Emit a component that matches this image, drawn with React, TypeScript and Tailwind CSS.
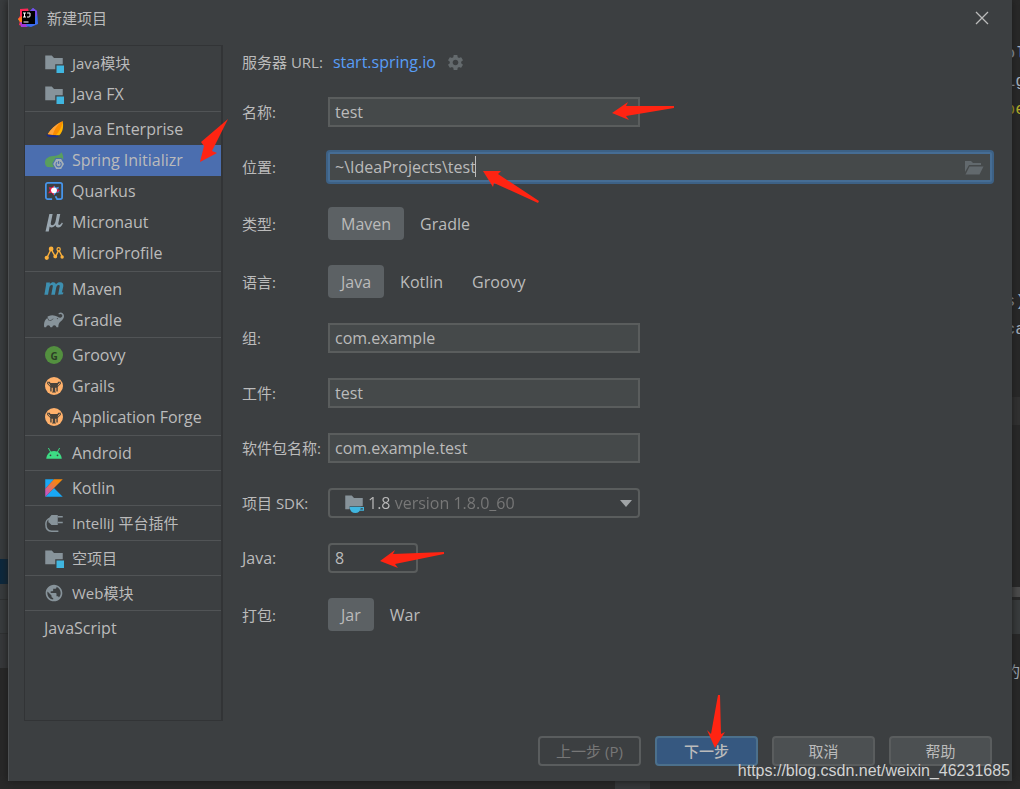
import { ReactNode, useState } from 'react';
import { MdPublic, MdSettings } from 'react-icons/md';
import { SiGradle } from 'react-icons/si';

const Svg = ({ children }: { children: ReactNode }) => (
    <svg viewBox="0 0 16 16" className="size-5 shrink-0" aria-hidden="true">{children}</svg>
);

const FolderShape = () => <path d="M1 2h5.2l1.8 2H15v9H1z" fill="#87939a" />;

const ModuleIcon = () => (
    <Svg>
        <FolderShape />
        <path d="M9 9h7v7H9z" fill="#3c3f41" />
        <path d="M10 10h6v6h-6z" fill="#40b6e0" />
    </Svg>
);

const SdkIcon = () => (
    <Svg>
        <FolderShape />
        <path d="M4.5 10.500H16v5.500H4.5z" fill="#3c3f41" />
        <path d="M4.500 11h9c0 3-1.800 5-4.500 5s-4.500-2-4.500-5z" fill="#40b6e0" />
        <path d="M13 11.700h2.600v1.900H12.500" fill="none" stroke="#40b6e0" />
    </Svg>
);

const EnterpriseIcon = () => (
    <Svg>
        <path d="M15 1.500C9.500 4 5 8.500 3 12.300l7 .7C13 9.500 15 6 15 1.500z" fill="#f98b00" />
        <path d="M15 1.500c.7 4.500.3 8.500-2.800 11.500H9.500C12.500 9.500 14.500 5.500 15 1.500z" fill="#ffb300" />
        <path d="M13.500 2.500C9 4.500 5.500 8 3 12l4 .5C8 8.500 10.500 5 13.500 2.500z" fill="#ffa33a" />
        <path d="M1.500 12.300l5 .5 5.500.6-1.500 1.200H5c-1.500-.2-2.700-1-3.500-2.300z" fill="#1c2d85" />
    </Svg>
);

const SpringIcon = () => (
    <Svg>
        <path d="M14 1.800c-1.300 2.200-3.600 2.800-6.600 3C3.300 5 1 7 .8 9.800c-.1 1.600.5 2.800 1.700 3.700l5 .3 7.700-5.600C15.800 6.200 15.300 4 14 1.800z" fill="#599e5e" />
        <path d="M9.200 6.300h5l2.600 4.700-2.600 4.800h-5L6.600 11z" fill="#4b6eaf" />
        <path d="M9.700 7.200h4L16 11.200l-2.300 4h-4l-2.300-4z" fill="#a4afb6" />
        <path d="M10.500 9.700a2.100 2.100 0 1 0 2.400 0M11.700 8.800v2.400" fill="none" stroke="#4b6eaf" strokeWidth=".9" />
    </Svg>
);

const QuarkusIcon = () => (
    <Svg>
        <path d="M6.500 14.500H3A1.500 1.500 0 0 1 1.500 13V3A1.500 1.500 0 0 1 3 1.500h10A1.500 1.500 0 0 1 14.500 3v10a1.500 1.500 0 0 1-1.500 1.500h-2.500l-1.300-2.300" fill="none" stroke="#4695eb" strokeWidth="1.400" />
        <path d="M8 3.500l1.500 1.700L12 4.500l-1 2.800 1.500 1.700-2.700.3L8 11.500z" fill="#4695eb" />
        <path d="M8 3.500v8L6.300 9.500l-3 .2 1.500-2.200-1-2.500 2.700.2z" fill="#e0214f" />
        <path d="M12.700 7.500l-2.500 1.700V6z" fill="#e0214f" />
        <circle cx="8" cy="7.400" r="2.300" fill="#fff" />
    </Svg>
);

const MicronautIcon = () => (
    <Svg>
        <path d="M4.300 1.500h2.600L5.500 8.300c-.3 1.500.1 2.200 1 2.200 1.200 0 2.300-1.200 2.700-3l1.200-6H13l-1.500 7.300c-.2 1 0 1.500.6 1.500.8 0 1.600-.7 2.200-1.900l.8.5c-.8 2.200-2.100 3.500-3.800 3.500-1.300 0-2-.7-2-2-1 1.300-2.100 2-3.300 2-.7 0-1.200-.3-1.500-.8L3.800 15.500H1.200z" fill="#9aa7b0" />
    </Svg>
);

const MicroProfileIcon = () => (
    <Svg>
        <path d="M2.200 12L5.700 5l3.500 6.200 2.600-5.700 2.800 5.500" fill="none" stroke="#fbb03b" strokeWidth="1.100" />
        <circle cx="2.200" cy="11.800" r="1.700" fill="#fbb03b" />
        <circle cx="5.700" cy="4.700" r="1.900" fill="#fbb03b" />
        <circle cx="9" cy="10.700" r="1.500" fill="#fbb03b" />
        <circle cx="11.700" cy="5" r="1.300" fill="#3c3f41" stroke="#fbb03b" />
        <circle cx="14.500" cy="11.200" r="1.400" fill="#fbb03b" />
    </Svg>
);

const MavenIcon = () => (
    <Svg>
        <path d="M1.800 2.800h3l-.2 1.300C5.500 3 6.400 2.500 7.400 2.500c1.200 0 1.900.6 2.100 1.700.9-1.200 2-1.700 3.300-1.700 2.200 0 3 1.300 2.600 3.400L14.300 10.800l1.200-.2-.3 1.600-3.900.3 1.200-6.300c.2-1-.1-1.500-.8-1.500-1 0-1.700.9-2 2.400L8.700 12.500H5.800L7 6.200c.2-1-.1-1.500-.8-1.500-1 0-1.700.9-2 2.400L3.200 12.500H.3L1.600 5z" fill="#3d8fb0" />
    </Svg>
);

const GrailsIcon = () => (
    <Svg>
        <circle cx="8" cy="8" r="7.200" fill="#ffb16b" />
        <path d="M2.500 4.500h2.200l.5 1h5.600l.5-1h2.200v1.700l-1.600 1.600-.9 1v3.600h-1.100V9.300H9v2.900l.7 1H6.300l.7-1V9.300h-.9v3.100H5V8.800l-.9-1-1.600-1.600z" fill="#46423c" />
        <path d="M3.300 5.300l1.500 2.200M12.700 5.300l-1.500 2.200" stroke="#ffb16b" strokeWidth=".7" />
    </Svg>
);

const GroovyIcon = () => (
    <span className="m-px grid size-[18px] shrink-0 place-items-center rounded-full bg-[#53903f] text-[10px] font-bold text-[#2b3d26]">G</span>
);

const AndroidIcon = () => (
    <Svg>
        <path d="M1.800 12.500C2 9 4.600 6.300 8 6.300s6 2.700 6.200 6.200z" fill="#3ddc84" />
        <path d="M3.500 4l1.800 3.200M12.500 4l-1.800 3.200" stroke="#3ddc84" strokeWidth=".8" />
        <circle cx="5.200" cy="9.800" r=".7" fill="#3c3f41" />
        <circle cx="10.800" cy="9.800" r=".7" fill="#3c3f41" />
    </Svg>
);

const KotlinIcon = () => (
    <Svg>
        <defs>
            <linearGradient id="kt" x1="0" y1="1" x2="1" y2="0">
                <stop offset=".15" stopColor="#c757bc" />
                <stop offset=".45" stopColor="#e8744f" />
                <stop offset=".8" stopColor="#f88909" />
            </linearGradient>
        </defs>
        <path d="M1 1h7L1 8.500zM1 15l7-7 7 7z" fill="#19a8f5" />
        <path d="M8 1h7L1 15V8.500z" fill="url(#kt)" />
    </Svg>
);

const PluginIcon = () => (
    <Svg>
        <path d="M6 1.500h5v8H6l-2-2H3.500V4H4z" fill="#87939a" />
        <path d="M11 3h4M11 7.500h4" stroke="#87939a" strokeWidth="1.200" />
        <path d="M4.500 4.500C2.500 5 1.500 6.800 1.500 9c0 3.500 1.800 5.500 4.500 5.500h5.500" fill="none" stroke="#87939a" strokeWidth="1.200" />
    </Svg>
);

const IdeaIcon = () => (
    <svg viewBox="0 0 20 20" className="size-5" aria-hidden="true">
        <path d="M2 1l8-.5 2 8L4 18l-3-1 1-4-2-2 2-3z" fill="#fe2857" />
        <path d="M0 11l4-3 2 6-3 2z" fill="#fc801d" />
        <path d="M2 14l10 2-3 3H3z" fill="#a238d6" />
        <path d="M12 3l3-3 4 3 1 13-7 3-5-1z" fill="#3b6cf0" />
        <path d="M12 3l3-3 4 3v5l-6 2z" fill="#7b4be8" />
        <path d="M4 3h13v13H4z" fill="#000" />
        <path d="M5 5h3M6.500 5v4M5 9h3M9 5h3v3q0 1-1 1H9M5.500 14h5" fill="none" stroke="#fff" />
    </svg>
);

type Item = { name: string; icon?: ReactNode };

const groups: Item[][] = [
    [
        { name: 'Java模块', icon: <ModuleIcon /> },
        { name: 'Java FX', icon: <ModuleIcon /> },
    ],
    [
        { name: 'Java Enterprise', icon: <EnterpriseIcon /> },
        { name: 'Spring Initializr', icon: <SpringIcon /> },
        { name: 'Quarkus', icon: <QuarkusIcon /> },
        { name: 'Micronaut', icon: <MicronautIcon /> },
        { name: 'MicroProfile', icon: <MicroProfileIcon /> },
    ],
    [
        { name: 'Maven', icon: <MavenIcon /> },
        { name: 'Gradle', icon: <SiGradle className="size-5 shrink-0 text-[#87939a]" /> },
    ],
    [
        { name: 'Groovy', icon: <GroovyIcon /> },
        { name: 'Grails', icon: <GrailsIcon /> },
        { name: 'Application Forge', icon: <GrailsIcon /> },
    ],
    [{ name: 'Android', icon: <AndroidIcon /> }],
    [{ name: 'Kotlin', icon: <KotlinIcon /> }],
    [{ name: 'IntelliJ 平台插件', icon: <PluginIcon /> }],
    [{ name: '空项目', icon: <ModuleIcon /> }],
    [{ name: 'Web模块', icon: <MdPublic className="size-5 shrink-0 text-[#87939a]" /> }],
    [{ name: 'JavaScript' }],
];

// Latin-only texts are set a little larger than the ones with Chinese in them
const textSize = (text: string) => (/^[\x20-\x7e]+$/.test(text) ? 'text-[16px]' : 'text-[15px]');

// Red pointers laid over the controls they mark
const Arrow = ({ points, className }: { points: string; className: string }) => (
    <svg className={`pointer-events-none absolute z-10 overflow-visible ${className}`} aria-hidden="true">
        <polygon points={points} fill="#ff2412" />
    </svg>
);

const Row = ({ label, id, children }: { label: string; id: string; children: ReactNode }) => (
    <div className="flex items-center">
        <label htmlFor={id} className={`w-[86px] shrink-0 whitespace-nowrap ${textSize(label)}`}>{label}</label>
        {children}
    </div>
);

const Choice = ({ label, options, initial }: { label: string; options: string[]; initial: string }) => {
    const [value, setValue] = useState(initial);

    return (
        <div className="flex items-center" role="group" aria-label={label}>
            <span className="w-[86px] shrink-0">{label}</span>
            <div className="flex gap-[3px]">
                {options.map((option) => (
                    <button
                        key={option}
                        type="button"
                        aria-pressed={option === value}
                        onClick={() => setValue(option)}
                        className={`h-[33px] rounded px-[13px] text-[16px] ${option === value ? 'bg-[#5c6164]' : ''}`}
                    >
                        {option}
                    </button>
                ))}
            </div>
        </div>
    );
};

const field = 'h-[30px] w-[312px] border-2 border-[#5a5d5d] bg-[#45494a] px-[5px] text-[16px] outline-none';
const footerButton = 'h-[30px] w-[103px] rounded border-2';

const App = () => {
    const [selected, setSelected] = useState('Spring Initializr');

    return (
        <div className="relative flex min-h-screen flex-col overflow-hidden bg-[#292929] font-['Open_Sans','Noto_Sans_CJK_SC',sans-serif] text-[15px] leading-5 text-[#bbbbbb]">
            <div className="flex flex-1">
                {/* editor window showing behind the dialog */}
                <div className="flex w-2 shrink-0 flex-col">
                    <div className="h-[559px] bg-[#393c3e]" />
                    <div className="h-[25px] bg-[#0d293e]" />
                    <div className="h-4 border-b border-[#303233] bg-[#393c3e]" />
                    <div className="h-[34px] border-b border-[#303233] bg-[#393c3e]" />
                    <div className="h-[34px] bg-[#37393b]" />
                </div>

                <main className="relative flex min-w-0 flex-1 flex-col border-l border-[#4d5052] bg-[#3c3f41] shadow-[0_0_8px_#1a1a1a]">
                    <header className="flex h-9 items-center pr-[23px] pl-[9px]">
                        <IdeaIcon />
                        <h1 className="ml-[9px] flex-1">新建项目</h1>
                        <button type="button" aria-label="Close">
                            <svg viewBox="0 0 14 14" className="size-3.5" aria-hidden="true">
                                <path d="M1 1l12 12M13 1L1 13" stroke="#bbbbbb" strokeWidth="1.300" />
                            </svg>
                        </button>
                    </header>

                    <div className="mt-[9px] flex flex-1 pr-5 pl-[15px]">
                        <nav className="relative w-[199px] shrink-0 border border-r-2 border-[#323436]">
                            {groups.map((items, i) => (
                                <ul
                                    key={i}
                                    className={`pt-0.5 ${items.length > 2 ? 'pb-0.5' : 'pb-px'} ${i > 0 ? 'border-t border-[#515456]' : ''}`}
                                >
                                    {items.map((item) => (
                                        <li key={item.name}>
                                            <button
                                                type="button"
                                                onClick={() => setSelected(item.name)}
                                                className={`flex h-[31px] w-full items-center gap-2 pb-0.5 pl-[19px] whitespace-nowrap ${textSize(item.name)} ${item.name === selected ? 'bg-[#4b6eaf]' : ''}`}
                                            >
                                                {item.icon}
                                                {item.name}
                                            </button>
                                        </li>
                                    ))}
                                </ul>
                            ))}
                            <Arrow
                                className="top-[73px] left-[175px] h-11 w-7"
                                points="28,0 1,23 4,27 0,43 17,34 12,32"
                            />
                        </nav>

                        <form className="ml-[19px] flex min-w-0 flex-1 flex-col gap-[25px]" onSubmit={(e) => e.preventDefault()}>
                            <div className="-mb-[7px] flex h-[34px] items-center whitespace-nowrap">
                                <span>服务器 URL:</span>
                                <a href="#server" className="ml-2.5 text-[16px] text-[#589df6]">start.spring.io</a>
                                <button type="button" aria-label="Server settings" className="ml-2.5">
                                    <MdSettings className="size-[19px] text-[#646a6d]" />
                                </button>
                            </div>

                            <Row label="名称:" id="name">
                                <div className="relative">
                                    <input id="name" defaultValue="test" className={field} />
                                    <Arrow
                                        className="top-[5px] left-[284px] h-[18px] w-[62px]"
                                        points="0,11 16,0 14,4 62,4 62,6 14,14 17,18"
                                    />
                                </div>
                            </Row>

                            <Row label="位置:" id="location">
                                <div className="relative flex-1">
                                    <input
                                        id="location"
                                        defaultValue="~\IdeaProjects\test"
                                        className="h-[30px] w-full rounded-xs border-2 border-[#466d94] bg-[#45494a] px-[5px] text-[16px] ring-2 ring-[#3d6185] outline-none"
                                    />
                                    <span className="absolute top-1 left-[147px] h-[21px] w-px bg-[#bbbbbb]" />
                                    <svg viewBox="0 0 20 16" className="absolute top-2 right-2 h-4 w-5" aria-hidden="true">
                                        <path d="M1 1h6l2 2h8v2H5L1 12z" fill="#62696d" />
                                        <path d="M5.500 6.500H19.500L15.500 14.500H1.500z" fill="#62696d" />
                                    </svg>
                                    <Arrow
                                        className="top-[19px] left-[155px] h-8 w-14"
                                        points="0,0 18,0 15,3 56,30 55,32 11,12 10,16"
                                    />
                                </div>
                            </Row>

                            <Choice label="类型:" options={['Maven', 'Gradle']} initial="Maven" />
                            <Choice label="语言:" options={['Java', 'Kotlin', 'Groovy']} initial="Java" />

                            <Row label="组:" id="group">
                                <input id="group" defaultValue="com.example" className={field} />
                            </Row>
                            <Row label="工件:" id="artifact">
                                <input id="artifact" defaultValue="test" className={field} />
                            </Row>
                            <Row label="软件包名称:" id="package">
                                <input id="package" defaultValue="com.example.test" className={field} />
                            </Row>

                            <Row label="项目 SDK:" id="sdk">
                                <div className="relative">
                                    <select
                                        id="sdk"
                                        className="block h-[30px] w-[312px] appearance-none rounded border-2 border-[#5a5d5d] bg-[linear-gradient(90deg,#bbbbbb_62px,#787878_62px)] bg-clip-text pl-[38px] text-[16px] text-transparent outline-none"
                                    >
                                        <option>1.8 version 1.8.0_60</option>
                                    </select>
                                    <span className="pointer-events-none absolute top-[5px] left-4"><SdkIcon /></span>
                                    <svg viewBox="0 0 12 7" className="pointer-events-none absolute top-3 right-2 h-[7px] w-3" aria-hidden="true">
                                        <path d="M0 0h12L6 7z" fill="#a0a4a6" />
                                    </svg>
                                </div>
                            </Row>

                            <Row label="Java:" id="java">
                                <div className="relative">
                                    <select id="java" className="block h-[30px] w-[90px] appearance-none rounded border-2 border-[#5a5d5d] px-[5px] text-[16px] outline-none">
                                        <option>8</option>
                                    </select>
                                    <Arrow
                                        className="top-[7px] left-[52px] h-[18px] w-16"
                                        points="0,11 15,0 13,4 64,2 64,4 15,14 18,18"
                                    />
                                </div>
                            </Row>

                            <Choice label="打包:" options={['Jar', 'War']} initial="Jar" />
                        </form>
                    </div>

                    <footer className="flex justify-end gap-3.5 py-[15px] pr-5">
                        <button type="button" disabled className={`${footerButton} border-[#5a5d5e] text-[#777777]`}>上一步 (P)</button>
                        <div className="relative">
                            <button type="button" className={`${footerButton} border-[#4c708c] bg-[#365880] font-medium`}>下一步</button>
                            <Arrow
                                className="-top-[41px] left-[52px] h-[53px] w-[18px]"
                                points="11,0 13,0 14,39 18,37 8,53 0,35 4,39"
                            />
                        </div>
                        <button type="button" className={`${footerButton} border-[#5a5d5e] bg-[#4c5052]`}>取消</button>
                        <button type="button" className={`${footerButton} border-[#5a5d5e] bg-[#4c5052]`}>帮助</button>
                    </footer>
                </main>

                <div className="w-2 shrink-0 overflow-hidden font-['Liberation_Mono','Noto_Sans_CJK_SC',monospace] text-[17px] whitespace-nowrap">
                    <div className="-ml-[7px] pt-10 leading-7 text-[#a9b7c6]">ol</div>
                    <div className="-ml-[7px] leading-7 text-[#a9b7c6]">ig</div>
                    <div className="-ml-[7px] leading-7 text-[#bbb529]">be</div>
                    <div className="-ml-[7px] pt-[164px] leading-7 text-[#a9b7c6]">s)</div>
                    <div className="-ml-[7px] leading-7 text-[#a9b7c6]">ca</div>
                    <div className="mt-[53px] h-7 bg-[#323232]" />
                    <div className="mt-[162px] h-2.5 bg-[#4d4d4d]" />
                    <div className="mt-[3px] h-[34px] bg-[#3a3d3e]" />
                    <div className="-ml-[7px] pt-[26px] text-[15px] leading-7 text-[#a9b7c6]">的</div>
                </div>
            </div>
            <div className="flex h-2 justify-center pr-[388px] pl-[632px]">
                <div className="w-[35px] shrink-0 bg-[#36393b]" />
            </div>
            <p className="pointer-events-none absolute right-2.5 bottom-2 z-20 font-['Liberation_Sans',sans-serif] text-[16px] text-[#d2d3d3]">
                https://blog.csdn.net/weixin_46231685
            </p>
        </div>
    );
};

export default App;
